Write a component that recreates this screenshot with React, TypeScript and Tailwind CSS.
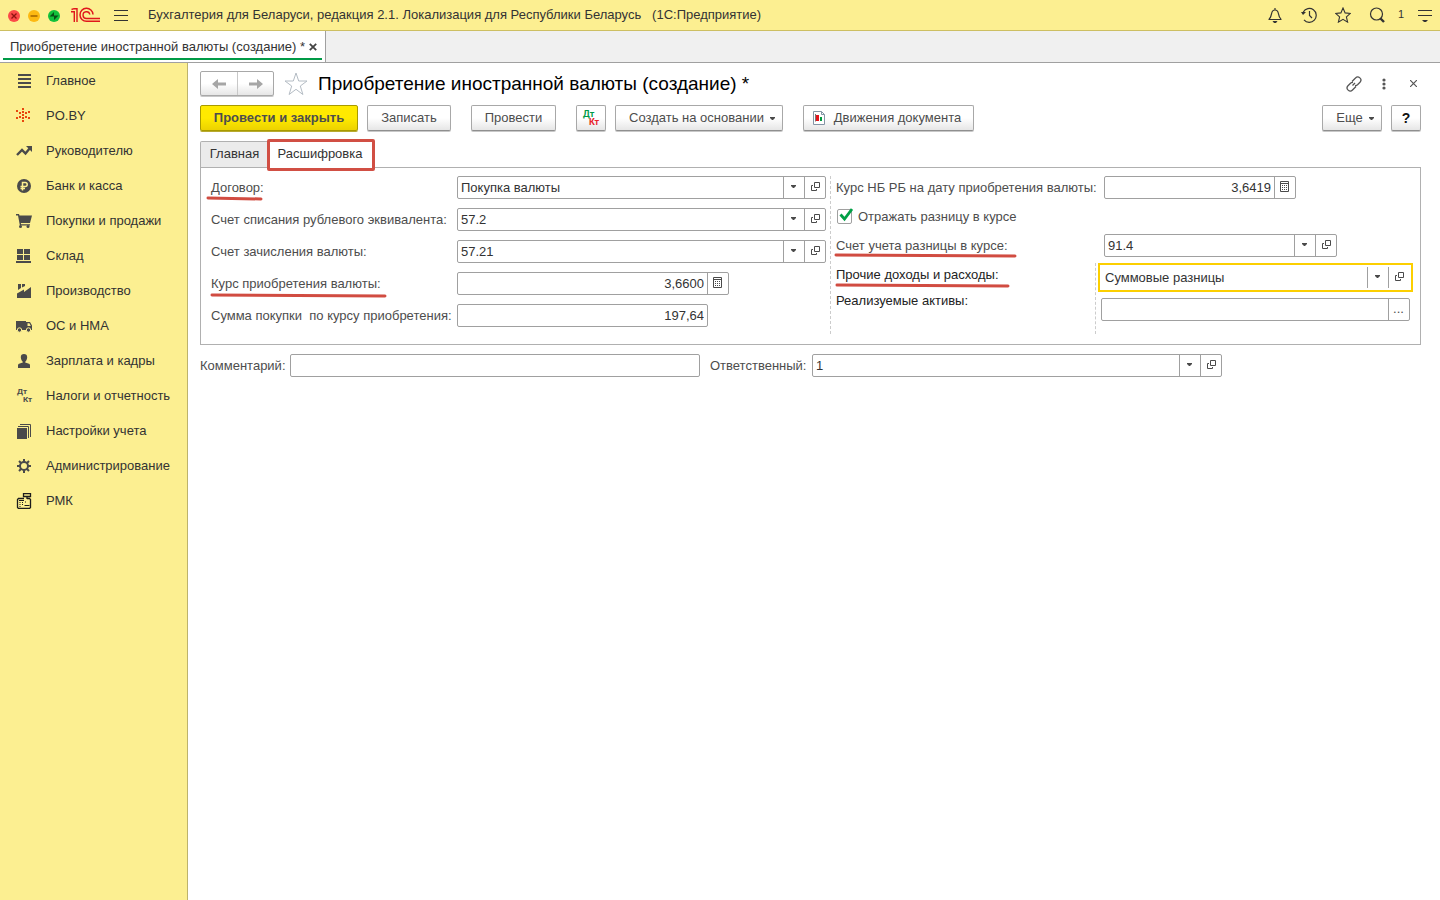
import { useState, type ReactNode } from "react";
import { clsx } from "clsx";

/* ---------- icons ---------- */

const MenuLinesIcon = () => (
  <svg width="16" height="16" viewBox="0 0 16 16" fill="#4a4a4a">
    <path d="M2 1h13v2H2zM2 5h13v2H2zM2 9h13v2H2zM2 13h13v2H2z" />
  </svg>
);

const DOTS = [
  [6, 0], [6, 3], [6, 6], [6, 9], [6, 12], [0, 2], [0, 9],
  [3, 4], [3, 8], [9, 4], [9, 8], [12, 3], [12, 9],
];

const PoByIcon = () => (
  <svg width="16" height="16" viewBox="0 0 16 16" fill="#e8470e">
    {DOTS.map(([x, y]) => (
      <rect key={`${x}-${y}`} x={x} y={y} width="2" height="2" />
    ))}
  </svg>
);

const TrendIcon = () => (
  <svg width="16" height="16" viewBox="0 0 16 16">
    <path d="M1 12l5-5 3.5 3.5L14 5" fill="none" stroke="#4a4a4a" strokeWidth="2.4" />
    <path d="M10 3h6v6z" fill="#4a4a4a" />
  </svg>
);

const RubleIcon = () => (
  <svg width="16" height="16" viewBox="0 0 16 16">
    <circle cx="8" cy="8" r="7" fill="#4a4a4a" />
    <path d="M6.5 12.500V4.500h2.700a2 2 0 0 1 0 4H4.500M4.500 10.500H9" fill="none" stroke="#fcef91" strokeWidth="1.500" />
  </svg>
);

const CartIcon = () => (
  <svg width="16" height="16" viewBox="0 0 16 16" fill="#4a4a4a">
    <path d="M0 1h3l.5 1.500H16L14 10H4.800l.3 1.200H14v1.300H3.900L2 2.500H0z" />
    <circle cx="4.500" cy="13.500" r="1.500" />
    <circle cx="12" cy="13.500" r="1.500" />
  </svg>
);

const WarehouseIcon = () => (
  <svg width="16" height="16" viewBox="0 0 16 16" fill="#4a4a4a">
    <path d="M1 1h6v5H1zM8 1h6v5H8zM1 7h6v5H1zM8 7h6v5H8zM0 13h15v2H0z" />
  </svg>
);

const FactoryIcon = () => (
  <svg width="16" height="16" viewBox="0 0 16 16" fill="#4a4a4a">
    <path d="M1 15V10.500l7-4V9l7-5v11zM2 1h3v4L2 7zM6 1h3v2L6 4.500z" />
  </svg>
);

const TruckIcon = () => (
  <svg width="16" height="16" viewBox="0 0 16 16" fill="#4a4a4a">
    <path d="M0 3h10v9H0z" />
    <path fillRule="evenodd" d="M10 4h4l2 3.500V12h-6zm1.500 1.300v2.700h3.300L13.400 5.300z" />
    <circle cx="3.500" cy="12" r="2.200" stroke="#fcef91" />
    <circle cx="12.500" cy="12" r="2.200" stroke="#fcef91" />
  </svg>
);

const PersonIcon = () => (
  <svg width="16" height="16" viewBox="0 0 16 16" fill="#4a4a4a">
    <path d="M8 1c2 0 3.200 1.200 3.200 3.200S9.800 8.500 9.200 8.800v.7l3.800 1.300c.8.300 1 1 1 1.700V15H2v-2.500c0-.7.300-1.400 1-1.700l3.800-1.300v-.7C6.200 8.500 4.800 6.200 4.800 4.200S6 1 8 1z" />
  </svg>
);

const DtKtIcon = () => (
  <span className="flex h-4 w-4 flex-col pl-px font-['Roboto',sans-serif] text-[8px] leading-[8px] font-bold text-[#4a4a4a]">
    <span>Дт</span>
    <span className="self-end">Кт</span>
  </span>
);

const BooksIcon = () => (
  <svg width="16" height="16" viewBox="0 0 16 16">
    <path d="M1 5h10v11H1z" fill="#4a4a4a" />
    <path d="M2 3.500h10.500V15M4 1.500h10.500V14" fill="none" stroke="#4a4a4a" />
  </svg>
);

const GearIcon = () => (
  <svg width="16" height="16" viewBox="0 0 16 16" fill="none" stroke="#4a4a4a">
    <circle cx="8" cy="8" r="4" strokeWidth="2" />
    <path d="M8 1v3M8 12v3M1 8h3M12 8h3M3 3l2.200 2.200M10.800 10.800L13 13M13 3l-2.200 2.200M5.200 10.800L3 13" strokeWidth="2" />
  </svg>
);

const CashRegisterIcon = () => (
  <svg width="16" height="16" viewBox="0 0 16 16" fill="none" stroke="#1c1c1c">
    <path d="M7.500.5h7v3h-7zM11 3.500V6M8 5.500H2.500l-1 1v8l1 1h11l1-1v-8l-1-1H11" strokeWidth="1.300" />
    <path d="M3 7.500h5M3.500 9.500h1M6 9.500h1M3.500 11.500h1M6 11.500h1M3.500 13.500h1M8.500 12.500h5M9 9h1" />
  </svg>
);

const OpenIcon = () => (
  <svg width="11" height="9" viewBox="-2 0 11 9" fill="none" stroke="#4a4a4a">
    <path d="M3.500.5h5v5h-5zM2 3.500H.5v5h5V7" />
  </svg>
);

const CaretIcon = () => (
  <svg width="5" height="3" viewBox="0 0 5 3" fill="#4a4a4a">
    <path d="M0 0h5v1L3 3H2L0 1z" />
  </svg>
);

const CalcIcon = () => (
  <svg width="9" height="11" viewBox="0 0 9 11">
    <path d="M.5.5h8v10h-8zM.5 2.500h8" fill="none" stroke="#4a4a4a" />
    <path d="M2 4h1v1H2zM4 4h1v1H4zM6 4h1v1H6zM2 6h1v1H2zM4 6h1v1H4zM6 6h1v1H6zM2 8h1v1H2zM4 8h1v1H4zM6 8h1v1H6z" fill="#4a4a4a" />
  </svg>
);

const ReportIcon = () => (
  <svg width="14" height="14" viewBox="0 0 14 14">
    <path d="M1.500.5h8l3 3v10h-11z" fill="#fff" stroke="#8495a5" />
    <path d="M9.500.5v3h3" fill="none" stroke="#8495a5" />
    <path d="M3.500 3v7.500" fill="none" stroke="#777" />
    <path d="M4 4h3v6H4z" fill="#e3131b" />
    <path d="M8 6h2v4H8z" fill="#009a3e" />
  </svg>
);

const LogoIcon = () => (
  <svg width="30" height="16" viewBox="0 0 30 16" fill="none" stroke="#e0161c">
    <path d="M0 4.700h3.300V15M.5 2.500L3 1.700h3V15" strokeWidth="1.400" />
    <path d="M22 7.500A6.500 6.500 0 1 0 15.500 14.300H29" strokeWidth="1.500" />
    <path d="M18.800 7.500A3.400 3.400 0 1 0 15.500 11.500H29" strokeWidth="1.400" />
  </svg>
);

/* ---------- data ---------- */

const SECTIONS = [
  { title: "Главное", icon: MenuLinesIcon },
  { title: "PO.BY", icon: PoByIcon },
  { title: "Руководителю", icon: TrendIcon },
  { title: "Банк и касса", icon: RubleIcon },
  { title: "Покупки и продажи", icon: CartIcon },
  { title: "Склад", icon: WarehouseIcon },
  { title: "Производство", icon: FactoryIcon },
  { title: "ОС и НМА", icon: TruckIcon },
  { title: "Зарплата и кадры", icon: PersonIcon },
  { title: "Налоги и отчетность", icon: DtKtIcon },
  { title: "Настройки учета", icon: BooksIcon },
  { title: "Администрирование", icon: GearIcon },
  { title: "РМК", icon: CashRegisterIcon },
];

/* ---------- building blocks ---------- */

function ToolButton({ children, className, label }: { children: ReactNode; className?: string; label?: string }) {
  return (
    <button
      aria-label={label}
      className={clsx(
        "flex h-[26px] items-center justify-center rounded-[2px] border border-[#a8a8a8] border-b-[#8f8f8f] bg-gradient-to-b from-white from-50% to-[#e6e6e6] whitespace-nowrap shadow-[0_1px_0_#c8c8c8]",
        className
      )}
    >
      {children}
    </button>
  );
}

type FieldProps = {
  id: string;
  value?: string;
  className?: string;
  right?: boolean;
  focused?: boolean;
  actions?: ("list" | "open" | "calc" | "more")[];
};

const ACTIONS = {
  list: { label: "Выбрать из списка", node: <CaretIcon /> },
  open: { label: "Открыть", node: <OpenIcon /> },
  calc: { label: "Калькулятор", node: <CalcIcon /> },
  more: { label: "Выбрать", node: "..." },
};

function Field({ id, value = "", className, right, focused, actions = [] }: FieldProps) {
  const [text, setText] = useState(value);
  return (
    <div
      className={clsx(
        "flex bg-white",
        focused ? "h-[29px] border-2 border-[#fccf00] p-[2px]" : "h-[23px] rounded-[2px] border border-[#a0a0a0]",
        className
      )}
    >
      <input
        id={id}
        value={text}
        onChange={(e) => setText(e.target.value)}
        className={clsx("min-w-0 flex-1 bg-transparent px-[3px] text-[#333] outline-none", right && "text-right")}
      />
      {actions.map((a) => (
        <button
          key={a}
          aria-label={ACTIONS[a].label}
          className="flex w-[21px] shrink-0 items-center justify-center border-l border-[#a0a0a0] pr-px pb-[2px] text-[#4d4d4d]"
        >
          {ACTIONS[a].node}
        </button>
      ))}
    </div>
  );
}

function Marker({ width, className }: { width: number; className: string }) {
  return (
    <svg width={width} height="5" className={clsx("absolute", className)} fill="none" stroke="#d14c41" strokeWidth="3" strokeLinecap="round">
      <path d={`M2 2L${width - 2} 3`} />
    </svg>
  );
}

function Label({ htmlFor, children, className, marker }: { htmlFor: string; children: ReactNode; className?: string; marker?: ReactNode }) {
  return (
    <label htmlFor={htmlFor} className={clsx("relative shrink-0 leading-5 whitespace-pre", className)}>
      {children}
      {marker}
    </label>
  );
}

/* ---------- page ---------- */

function Header() {
  return (
    <header className="flex h-[31px] items-center border-b border-[#cdbf62] bg-[#fcef91] px-2 text-[#333]">
      <div className="flex gap-2 pt-px">
        <button aria-label="Закрыть окно">
          <svg width="12" height="12" viewBox="0 0 12 12">
            <circle cx="6" cy="6" r="6" fill="#fb4a48" />
            <path d="M3.500 3.500l5 5M8.500 3.500l-5 5" stroke="#8f1210" strokeWidth="1.300" />
          </svg>
        </button>
        <button aria-label="Свернуть окно">
          <svg width="12" height="12" viewBox="0 0 12 12">
            <circle cx="6" cy="6" r="6" fill="#fdb912" />
            <path d="M2.500 6h7" stroke="#a86a00" strokeWidth="1.600" />
          </svg>
        </button>
        <button aria-label="Развернуть окно">
          <svg width="12" height="12" viewBox="0 0 12 12">
            <circle cx="6" cy="6" r="6" fill="#12c13b" />
            <path d="M1.500 6.500L6 2v4.500zM10.500 5.500L6 10V5.500z" fill="#064d14" />
          </svg>
        </button>
      </div>
      <div className="ml-[11px]">
        <LogoIcon />
      </div>
      <button aria-label="Меню" className="ml-[13px]">
        <svg width="14" height="12" viewBox="0 0 14 12" stroke="#333">
          <path d="M0 1.500h14M0 6.500h14M0 11.500h14" />
        </svg>
      </button>
      <span className="ml-5 flex-1 pb-px whitespace-pre">
        Бухгалтерия для Беларуси, редакция 2.1. Локализация для Республики Беларусь   (1С:Предприятие)
      </span>
      <div className="flex items-center gap-[18px]">
        <button aria-label="Уведомления">
          <svg width="16" height="16" viewBox="0 0 16 16" fill="none" stroke="#333" strokeWidth="1.200">
            <path d="M1.500 12.500h13M2 12c2-1.500 2.200-3 2.600-5.500C5 4.200 6 3 8 3s3 1.200 3.400 3.500c.4 2.500.6 4 2.600 5.500M8 3V1" />
            <path d="M5.500 14h5L9 16H7z" fill="#333" stroke="none" />
          </svg>
        </button>
        <button aria-label="История">
          <svg width="16" height="16" viewBox="0 0 16 16" fill="none" stroke="#333" strokeWidth="1.200">
            <path d="M2.300 5A6.900 6.900 0 1 1 3 12.800M8.500 4v4.500l2.500 2.500" />
            <path d="M0 5h5L2 8z" fill="#333" stroke="none" />
          </svg>
        </button>
        <button aria-label="Избранное">
          <svg width="16" height="16" viewBox="0 0 16 16" fill="none" stroke="#333" strokeWidth="1.100">
            <path d="M8 1l2.100 4.900 5.300.5-4 3.500 1.200 5.200L8 12.300l-4.600 2.800L4.600 9.900l-4-3.500 5.300-.5z" />
          </svg>
        </button>
        <button aria-label="Поиск">
          <svg width="16" height="16" viewBox="0 0 16 16" fill="none" stroke="#333">
            <circle cx="7.500" cy="7" r="6" strokeWidth="1.200" />
            <path d="M11.500 11.500l3.500 3.500" strokeWidth="2.400" />
          </svg>
        </button>
      </div>
      <span className="ml-[13px] pb-[2px] text-[11px]">1</span>
      <button aria-label="Настройки" className="ml-[14px]">
        <svg width="14" height="14" viewBox="0 0 14 14" fill="#333">
          <path d="M0 2h14v1H0zM0 7h14v1H0zM4 12h6l-2 2H6z" />
        </svg>
      </button>
    </header>
  );
}

function Sidebar() {
  return (
    <nav className="w-[188px] shrink-0 border-r border-[#bdb36c] bg-[#fcef91]">
      {SECTIONS.map(({ title, icon: Icon }) => (
        <a key={title} href="#" className="flex h-[35px] items-center gap-[14px] pt-px pl-4 whitespace-nowrap text-[#333]">
          <Icon />
          {title}
        </a>
      ))}
    </nav>
  );
}

export default function App() {
  const [reflect, setReflect] = useState(true);

  return (
    <div className="flex min-h-screen flex-col bg-white font-['Liberation_Sans',sans-serif] text-[13px] leading-5">
      <Header />

      {/* open windows */}
      <div className="flex h-8 border-b border-[#a0a0a0] bg-[#f0f0f0]">
        <div className="flex border-r border-[#a0a0a0] bg-white px-[3px]">
          <div className="mb-[2px] flex items-center gap-1 border-b-2 border-[#009a46] pt-1 pr-[5px] pl-[7px] text-[#333]">
            <a href="#">Приобретение иностранной валюты (создание) *</a>
            <button aria-label="Закрыть вкладку">
              <svg width="8" height="8" viewBox="0 0 8 8" stroke="#444" strokeWidth="1.800">
                <path d="M.8.8l6.400 6.400M7.200.8L.8 7.200" />
              </svg>
            </button>
          </div>
        </div>
      </div>

      <div className="flex flex-1">
        <Sidebar />

        <main className="min-w-0 flex-1 pt-2 pr-[19px] pl-3">
          <div className="flex h-[25px] items-center">
            <div className="flex h-[25px] rounded-[2px] border border-[#a8a8a8] bg-gradient-to-b from-white from-50% to-[#e6e6e6] shadow-[0_1px_0_#c8c8c8]">
              <button aria-label="Назад" className="flex w-9 items-center justify-center">
                <svg width="14" height="10" viewBox="0 0 14 10" fill="#a6a6a6">
                  <path d="M0 5l6-5v3.500h8v3H6V10z" />
                </svg>
              </button>
              <button aria-label="Вперед" className="flex w-9 items-center justify-center border-l border-[#c8c8c8]">
                <svg width="14" height="10" viewBox="0 0 14 10" fill="#a6a6a6">
                  <path d="M14 5L8 0v3.500H0v3h8V10z" />
                </svg>
              </button>
            </div>
            <button aria-label="В избранное" className="ml-[10px]">
              <svg width="24" height="24" viewBox="0 0 24 24" fill="none" stroke="#b4bcc4">
                <path d="M12 1l2.700 8H23l-6.700 5 2.600 8.500L12 17.300l-6.900 5.200L7.700 14 1 9h8.300z" />
              </svg>
            </button>
            <h1 className="ml-[10px] flex-1 text-[19px] text-black">Приобретение иностранной валюты (создание) *</h1>
            <div className="flex items-center">
              <button aria-label="Ссылка">
                <svg width="16" height="16" viewBox="0 0 16 16" fill="none" stroke="#555" strokeWidth="1.300">
                  <path d="M6 5.500l3.500-3.500a3 3 0 0 1 4.500 4.200L11.500 8.700a3 3 0 0 1-2.500.8M10 10.500L6.500 14A3 3 0 0 1 2 9.800L4.500 7.300A3 3 0 0 1 7 6.500M6.500 9.500l2.500-2.500" />
                </svg>
              </button>
              <button aria-label="Еще действия" className="ml-5">
                <svg width="4" height="12" viewBox="0 0 4 12" fill="#555">
                  <circle cx="2" cy="2" r="1.600" />
                  <circle cx="2" cy="6" r="1.600" />
                  <circle cx="2" cy="10" r="1.600" />
                </svg>
              </button>
              <button aria-label="Закрыть" className="mr-1 ml-6">
                <svg width="7" height="7" viewBox="0 0 7 7" stroke="#555" strokeWidth="1.200">
                  <path d="M0 0l7 7M7 0L0 7" />
                </svg>
              </button>
            </div>
          </div>

          {/* command bar */}
          <div className="mt-[9px] flex text-[#4d4d4d]">
            <button className="h-[26px] w-[158px] rounded-[2px] border border-[#a89a00] bg-gradient-to-b from-[#ffea00] from-50% to-[#ecd200] font-bold whitespace-nowrap shadow-[0_1px_0_#b8aa30]">
              Провести и закрыть
            </button>
            <ToolButton className="ml-[9px] w-[84px]">Записать</ToolButton>
            <ToolButton className="ml-5 w-[85px]">Провести</ToolButton>
            <ToolButton className="ml-5 w-[30px]" label="Проводки">
              <span className="flex w-4 flex-col font-['Roboto',sans-serif] text-[9px] leading-[8px] font-bold">
                <span className="self-start text-[#009a46]">Дт</span>
                <span className="self-end text-[#e8222a]">Кт</span>
              </span>
            </ToolButton>
            <ToolButton className="ml-[9px] w-[168px] gap-[6px] pl-[6px]">
              Создать на основании
              <CaretIcon />
            </ToolButton>
            <ToolButton className="ml-5 w-[171px] gap-2 pr-1">
              <ReportIcon />
              Движения документа
            </ToolButton>
            <ToolButton className="ml-auto w-[60px] gap-[6px] pl-[6px]">
              Еще
              <CaretIcon />
            </ToolButton>
            <ToolButton className="ml-[9px] w-[30px] text-[14px] font-bold text-[#111]">?</ToolButton>
          </div>

          {/* form pages */}
          <div role="tablist" className="mt-[10px] flex h-[26px] text-[#333]">
            <button role="tab" className="w-[69px] rounded-tl-[2px] border border-b-0 border-[#b0b0b0] bg-[#ebebeb] pb-[2px]">
              Главная
            </button>
            <button role="tab" aria-selected className="relative z-10 -mb-px w-[104px] border-t border-r border-[#b0b0b0] bg-white pr-px pb-[3px]">
              Расшифровка
              <span className="absolute -top-[3px] -right-[3px] -bottom-[3px] -left-[2px] rounded-[2px] border-3 border-[#d14f44]" />
            </button>
          </div>

          <section className="flex border border-[#b0b0b0] px-[10px] pt-2 pb-[10px] text-[#4d4d4d]">
            <div className="grid shrink-0 grid-cols-[246px_369px] content-start items-center gap-y-[9px] border-r border-dashed border-[#ccc] pr-1">
              <Label htmlFor="contract" marker={<Marker width={57} className="top-[18px] -left-[5px]" />}>Договор:</Label>
              <Field id="contract" value="Покупка валюты" actions={["list", "open"]} />
              <Label htmlFor="debit">Счет списания рублевого эквивалента:</Label>
              <Field id="debit" value="57.2" actions={["list", "open"]} />
              <Label htmlFor="credit">Счет зачисления валюты:</Label>
              <Field id="credit" value="57.21" actions={["list", "open"]} />
              <Label htmlFor="rate" marker={<Marker width={177} className="top-[19px] -left-px" />}>Курс приобретения валюты:</Label>
              <Field id="rate" value="3,6600" right className="w-[272px]" actions={["calc"]} />
              <Label htmlFor="sum">{"Сумма покупки  по курсу приобретения:"}</Label>
              <Field id="sum" value="197,64" right className="w-[251px]" />
            </div>

            <div className="flex min-w-0 flex-1 flex-col pl-[5px]">
              <div className="flex items-center">
                <Label htmlFor="nbrate" className="w-[268px]">Курс НБ РБ на дату приобретения валюты:</Label>
                <Field id="nbrate" value="3,6419" right className="w-[192px]" actions={["calc"]} />
              </div>
              <label className="mt-[10px] flex h-4 items-center gap-[5px]">
                <span className="relative ml-px h-4 w-4">
                  <input
                    type="checkbox"
                    checked={reflect}
                    onChange={(e) => setReflect(e.target.checked)}
                    className="block h-[15px] w-[15px] appearance-none rounded-[2px] border border-[#a0a0a0] bg-white"
                  />
                  {reflect && (
                    <svg width="14" height="14" viewBox="0 0 14 14" className="pointer-events-none absolute -top-px left-[2px]" fill="none" stroke="#00a046" strokeWidth="2.800">
                      <path d="M1.500 6.500L5.500 11 13 1" />
                    </svg>
                  )}
                </span>
                Отражать разницу в курсе
              </label>
              <div className="mt-[9px] flex items-center">
                <Label htmlFor="diff" className="w-[268px]" marker={<Marker width={183} className="top-[17px] -left-[2px]" />}>
                  Счет учета разницы в курсе:
                </Label>
                <Field id="diff" value="91.4" className="w-[233px]" actions={["list", "open"]} />
              </div>
              <div className="mt-[6px] flex text-[#222]">
                <div className="flex h-[71px] w-[260px] shrink-0 flex-col gap-[6px] border-r border-dashed border-[#ccc] pt-[2px]">
                  <Label htmlFor="other" marker={<Marker width={175} className="top-[18px] -left-px" />}>Прочие доходы и расходы:</Label>
                  <Label htmlFor="assets">Реализуемые активы:</Label>
                </div>
                <div className="-mr-[3px] flex flex-1 flex-col gap-[6px] pl-[2px]">
                  <Field id="other" value="Суммовые разницы" focused actions={["list", "open"]} />
                  <Field id="assets" className="mx-[3px]" actions={["more"]} />
                </div>
              </div>
            </div>
          </section>

          <div className="mt-[9px] flex items-center text-[#4d4d4d]">
            <Label htmlFor="comment" className="w-[90px]">Комментарий:</Label>
            <Field id="comment" className="w-[410px]" />
            <Label htmlFor="owner" className="ml-[10px] w-[102px]">Ответственный:</Label>
            <Field id="owner" value="1" className="w-[410px]" actions={["list", "open"]} />
          </div>
        </main>
      </div>
    </div>
  );
}
